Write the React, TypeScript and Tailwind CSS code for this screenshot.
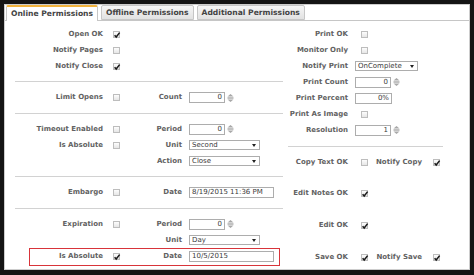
import React from 'react'

const font = "font-['DejaVu_Sans',Verdana,sans-serif]"

function Check({ on }: { on?: boolean }) {
  return (
    <span className="relative inline-block w-[7px] h-[7px] shrink-0 border border-[#bdbdbd] bg-gradient-to-b from-[#fdfdfd] to-[#e6e6e6]">
      {on && (
        <svg viewBox="0 0 8 8" className="absolute -left-[1px] -top-[1px] w-[8px] h-[8px]">
          <path d="M1.6 4.2 L3.2 6 L6.6 1.6" fill="none" stroke="#1a1a1a" strokeWidth="1.5" />
        </svg>
      )}
    </span>
  )
}

function Spin() {
  return (
    <svg viewBox="0 0 7 8" className="ml-[2px] w-[7px] h-[8px] shrink-0">
      <path d="M3.5 0 L6.5 2.6 H0.5 Z" fill="#a8a8a8" />
      <rect x="0.5" y="3.2" width="6" height="0.7" fill="#a8a8a8" />
      <rect x="0.5" y="4.3" width="6" height="0.7" fill="#a8a8a8" />
      <path d="M3.5 8 L6.5 5.4 H0.5 Z" fill="#a8a8a8" />
    </svg>
  )
}

function Input({ value, w, right, spin }: { value: string; w: string; right?: boolean; spin?: boolean }) {
  return (
    <div className="flex items-center">
      <div className={`${w} h-[11px] border border-[#adadad] bg-white flex items-center px-[2px] text-[7px] text-[#3a3a3a] ${right ? 'justify-end' : ''}`}>
        {value}
      </div>
      {spin && <Spin />}
    </div>
  )
}

function Select({ value, w }: { value: string; w: string }) {
  return (
    <div className={`${w} h-[10px] border border-[#adadad] bg-white flex items-center justify-between pl-[2px] pr-[3px] text-[7px] text-[#3a3a3a]`}>
      <span>{value}</span>
      <svg viewBox="0 0 4 3" className="w-[4px] h-[3px]">
        <path d="M0 0 H4 L2 3 Z" fill="#222" />
      </svg>
    </div>
  )
}

const lbl = 'font-bold text-[7px] text-[#626262] whitespace-nowrap text-right'

function LRow({ label, check, mid, children }: { label?: string; check?: 'on' | 'off'; mid?: string; children?: React.ReactNode }) {
  return (
    <div className="flex items-center h-4">
      <div className={`w-[88px] ${lbl}`}>{label}</div>
      <div className="w-[17px] pl-[10px] flex items-center">{check && <Check on={check === 'on'} />}</div>
      <div className={`w-[62px] ${lbl}`}>{mid}</div>
      <div className="ml-[7px] flex items-center">{children}</div>
    </div>
  )
}

function RRow({ label, check, children }: { label?: string; check?: 'on' | 'off'; children?: React.ReactNode }) {
  return (
    <div className="flex items-center h-4">
      <div className={`w-[60px] ${lbl}`}>{label}</div>
      {check ? (
        <div className="ml-[13px] flex items-center">
          <Check on={check === 'on'} />
          {children}
        </div>
      ) : (
        <div className="ml-[7px] flex items-center">{children}</div>
      )}
    </div>
  )
}

const Rule = () => (
  <div className="h-[15.5px] flex items-center">
    <div className="w-full h-px bg-[#d2d2d2]" />
  </div>
)

const Tab = ({ children, active }: { children: React.ReactNode; active?: boolean }) => (
  <div
    className={`h-[15px] px-[4px] flex items-center rounded-t-[2px] border-x border-[#c6c6c6] text-[7.6px] font-bold text-[#444] whitespace-nowrap ${
      active
        ? 'bg-white border-t-2 border-t-[#f2b33d] h-[16px] -mb-px'
        : 'border-t bg-gradient-to-b from-[#f6f6f6] to-[#e2e2e2] border-b border-b-[#c6c6c6]'
    }`}
  >
    {children}
  </div>
)

export default function App() {
  return (
    <div className={`w-[474px] h-[275px] bg-[#141414] pt-[4px] pl-[4px] pr-[4px] pb-[5px] ${font}`}>
      <div className="w-full h-full bg-white border border-[#cdcdcd] flex flex-col">
        <div className="flex items-end gap-[3px] pl-[1px] border-b border-[#c6c6c6]">
          <Tab active>Online Permissions</Tab>
          <Tab>Offline Permissions</Tab>
          <Tab>Additional Permissions</Tab>
        </div>

        <div className="flex pt-[5px] pl-[10px]">
          <div className="w-[268px] flex flex-col">
            <LRow label="Open OK" check="on" />
            <LRow label="Notify Pages" check="off" />
            <LRow label="Notify Close" check="on" />
            <Rule />
            <LRow label="Limit Opens" check="off" mid="Count">
              <Input value="0" w="w-[36px]" right spin />
            </LRow>
            <Rule />
            <LRow label="Timeout Enabled" check="off" mid="Period">
              <Input value="0" w="w-[36px]" right spin />
            </LRow>
            <LRow label="Is Absolute" check="off" mid="Unit">
              <Select value="Second" w="w-[71px]" />
            </LRow>
            <LRow mid="Action">
              <Select value="Close" w="w-[71px]" />
            </LRow>
            <Rule />
            <LRow label="Embargo" check="off" mid="Date">
              <Input value="8/19/2015 11:36 PM" w="w-[85px]" />
            </LRow>
            <Rule />
            <LRow label="Expiration" check="off" mid="Period">
              <Input value="0" w="w-[36px]" right spin />
            </LRow>
            <LRow mid="Unit">
              <Select value="Day" w="w-[71px]" />
            </LRow>
            <div className="relative">
              <LRow label="Is Absolute" check="on" mid="Date">
                <Input value="10/5/2015" w="w-[85px]" />
              </LRow>
              <div className="absolute left-[14px] right-[3px] top-0 -bottom-[2px] border-[1.5px] border-[#d8343a] pointer-events-none" />
            </div>
          </div>

          <div className="w-[155px] ml-[5px] flex flex-col">
            <RRow label="Print OK" check="off" />
            <RRow label="Monitor Only" check="off" />
            <RRow label="Notify Print">
              <Select value="OnComplete" w="w-[63px]" />
            </RRow>
            <RRow label="Print Count">
              <Input value="0" w="w-[36px]" right spin />
            </RRow>
            <RRow label="Print Percent">
              <Input value="0%" w="w-[37px]" right />
            </RRow>
            <RRow label="Print As Image" check="off" />
            <RRow label="Resolution">
              <Input value="1" w="w-[36px]" right spin />
            </RRow>
            <div className="h-4 flex items-center">
              <div className="w-full h-px bg-[#d2d2d2]" />
            </div>
            <RRow label="Copy Text OK" check="off">
              <div className={`w-[54px] ${lbl}`}>Notify Copy</div>
              <div className="ml-[11px] flex"><Check on /></div>
            </RRow>
            <div className="h-[15.5px]" />
            <RRow label="Edit Notes OK" check="on" />
            <div className="h-[15.5px]" />
            <RRow label="Edit OK" check="on" />
            <div className="h-4" />
            <RRow label="Save OK" check="on">
              <div className={`w-[54px] ${lbl}`}>Notify Save</div>
              <div className="ml-[11px] flex"><Check on /></div>
            </RRow>
          </div>
        </div>
      </div>
    </div>
  )
}
